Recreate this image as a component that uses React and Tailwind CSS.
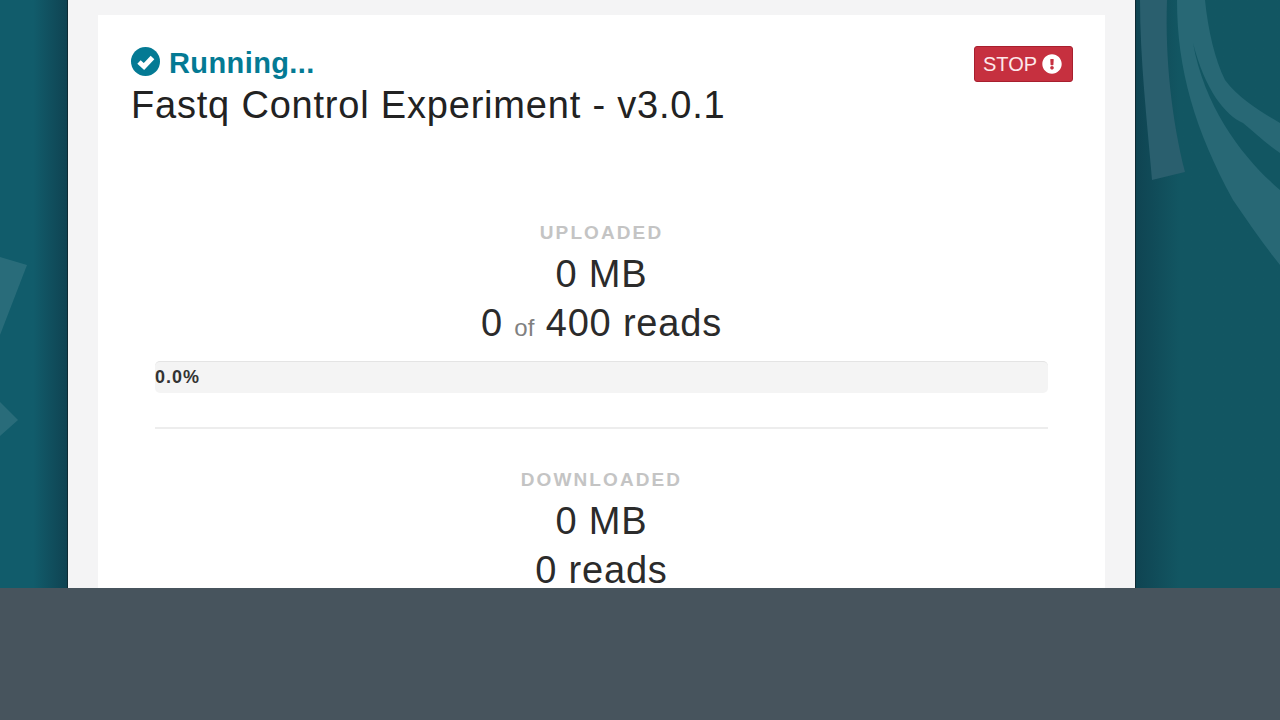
import React from 'react';
import { FaExclamationCircle } from 'react-icons/fa';

function LeftStrip() {
  return (
    <div className="w-[67px] shrink-0 relative overflow-hidden bg-gradient-to-r from-[#115c6b] from-50% to-[#0f4352]">
      <svg className="absolute inset-0" width="67" height="588" viewBox="0 0 67 588">
        <path d="M0 257 L27 265 L0 335 Z" fill="#ffffff" fillOpacity="0.1" />
        <path d="M0 402 L18 420 L0 436 Z" fill="#ffffff" fillOpacity="0.1" />
      </svg>
    </div>
  );
}

function RightStrip() {
  return (
    <div className="flex-1 relative overflow-hidden bg-gradient-to-r from-[#0f4452] to-[#125662] to-[30%]">
      <svg className="absolute inset-0" width="144" height="588" viewBox="1136 0 144 588">
        <path d="M1140 0 C1140 60 1147 120 1152 180 L1185 172 C1172 120 1165 60 1167 0 Z" fill="#2a5f6e" />
        <path d="M1177 0 C1177 70 1195 130 1233 200 C1248 222 1264 245 1280 265 L1280 123 C1262 112 1240 100 1225 80 C1215 60 1208 30 1205 0 Z" fill="#286875" />
        <path d="M1193 43 C1205 90 1225 115 1243 123 C1255 133 1268 145 1280 153 L1280 190 C1245 160 1205 110 1193 43 Z" fill="#125662" />
      </svg>
    </div>
  );
}

function Stat({ label, mb, reads }) {
  return (
    <div className="text-center">
      <div className="text-[19px] leading-[26px] font-bold tracking-[2.1px] text-[#c4c4c4]">{label}</div>
      <div className="mt-[10px] flex flex-col gap-[13px] text-[38px] leading-[36px] tracking-[0.8px] text-[#2b2b2b]">
        <div>{mb}</div>
        <div>{reads}</div>
      </div>
    </div>
  );
}

export default function App() {
  return (
    <div className="h-[720px] flex flex-col overflow-hidden bg-[#47545d] font-['Liberation_Sans',Arial,sans-serif]">
      <div className="h-[588px] shrink-0 flex overflow-hidden">
        <LeftStrip />
        {/* Pannello */}
        <div className="w-[1069px] shrink-0 bg-[#f4f4f5] border-x border-[#0d2a33] pt-[15px] px-[30px]">
          <div className="h-[700px] bg-white pt-[31px] pl-[33px] pr-[32px]">
            <div className="flex items-start justify-between">
              <div>
                <div className="flex items-center gap-[9px] h-[33px] text-[29px] tracking-[0.4px] font-bold text-[#047a94]">
                  <svg className="w-[29px] h-[29px] -mt-[3px]" viewBox="0 0 29 29">
                    <circle cx="14.5" cy="14.5" r="14.5" fill="#047a94" />
                    <path d="M8 15 L13 19.5 L21.5 10.5" fill="none" stroke="#ffffff" strokeWidth="5" />
                  </svg>
                  <span className="mt-[2px]">Running...</span>
                </div>
                <div className="text-[38px] leading-[46px] tracking-[0.8px] mt-[3px] text-[#222222]">Fastq Control Experiment - v3.0.1</div>
              </div>
              <button className="w-[99px] h-[36px] flex items-center pl-[8px] gap-[5px] rounded-[3px] bg-[#c6303f] border border-[#a81f2e] text-[#fde8ea] text-[20px]">
                STOP
                <FaExclamationCircle className="w-[20px] h-[20px] text-white" />
              </button>
            </div>
            <div className="pl-[24px] pr-[25px] pt-[92px]">
              <Stat
                label="UPLOADED"
                mb="0 MB"
                reads={<>0 <span className="text-[24px] tracking-normal text-[#808080]">of</span> 400 reads</>}
              />
              <div className="mt-[15px] h-[32px] rounded-[5px] bg-[#f4f4f4] border-t border-[#e4e4e4] flex items-center">
                <span className="text-[18px] font-bold tracking-[1px] text-[#333333] -mt-px">0.0%</span>
              </div>
              <div className="mt-[34px] h-[2px] bg-[#ededed]" />
              <div className="pt-[38px]">
                <Stat label="DOWNLOADED" mb="0 MB" reads="0 reads" />
              </div>
            </div>
          </div>
        </div>
        <RightStrip />
      </div>
    </div>
  );
}
